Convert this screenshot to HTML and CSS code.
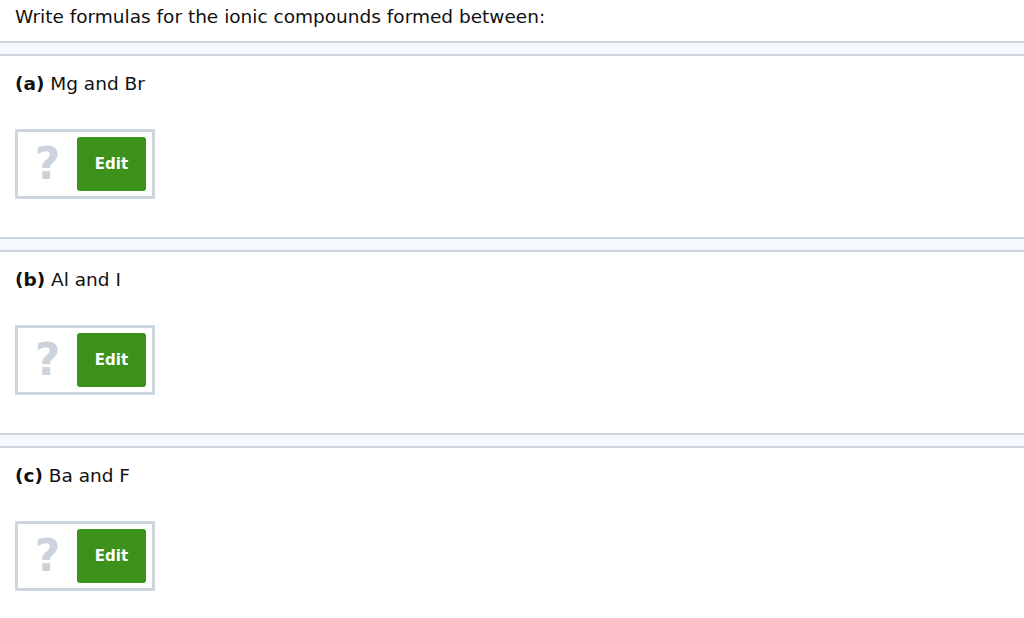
FILE: index.html
```html
<!DOCTYPE html>
<html>
<head>
<meta charset="utf-8">
<link rel="stylesheet" href="styles.css">
</head>
<body>
<div class="intro">Write formulas for the ionic compounds formed between:</div>

<div class="band"></div>
<section class="part">
  <div class="label"><b>(a)</b> Mg and Br</div>
  <div class="answer"><span class="q">?</span><button class="edit">Edit</button></div>
</section>

<div class="band"></div>
<section class="part">
  <div class="label"><b>(b)</b> Al and I</div>
  <div class="answer"><span class="q">?</span><button class="edit">Edit</button></div>
</section>

<div class="band"></div>
<section class="part">
  <div class="label"><b>(c)</b> Ba and F</div>
  <div class="answer"><span class="q">?</span><button class="edit">Edit</button></div>
</section>
</body>
</html>
```

FILE: styles.css
```css
html, body {
  margin: 0;
  padding: 0;
  background: #ffffff;
}
body {
  font-family: "DejaVu Sans", Verdana, sans-serif;
  font-size: 18.5px;
  color: #111111;
}
.intro {
  padding: 6px 15px 0;
  line-height: 22px;
  height: 35px;
}
.band {
  height: 11px;
  border-top: 2px solid #ccd4df;
  border-bottom: 2px solid #ccd4df;
  background: #f5f8fc;
}
.part {
  padding: 17px 15px 0;
  height: 164px;
}
.label {
  line-height: 22px;
}
.label b {
  font-weight: bold;
}
.answer {
  box-sizing: border-box;
  margin-top: 34px;
  width: 140px;
  height: 70px;
  border: 3px solid #cdd5df;
  display: flex;
  align-items: center;
  justify-content: space-between;
  padding: 0 6px 0 0;
}
.q {
  font-family: "DejaVu Sans", Verdana, sans-serif;
  font-weight: bold;
  font-size: 44px;
  color: #cdd3dc;
  width: 59px;
  text-align: center;
  line-height: 46px;
}
.edit {
  width: 69px;
  height: 54px;
  background: #3b9119;
  border: none;
  border-radius: 3px;
  color: #ffffff;
  font-family: "DejaVu Sans", Verdana, sans-serif;
  font-weight: bold;
  font-size: 15px;
  padding: 0;
}
```
